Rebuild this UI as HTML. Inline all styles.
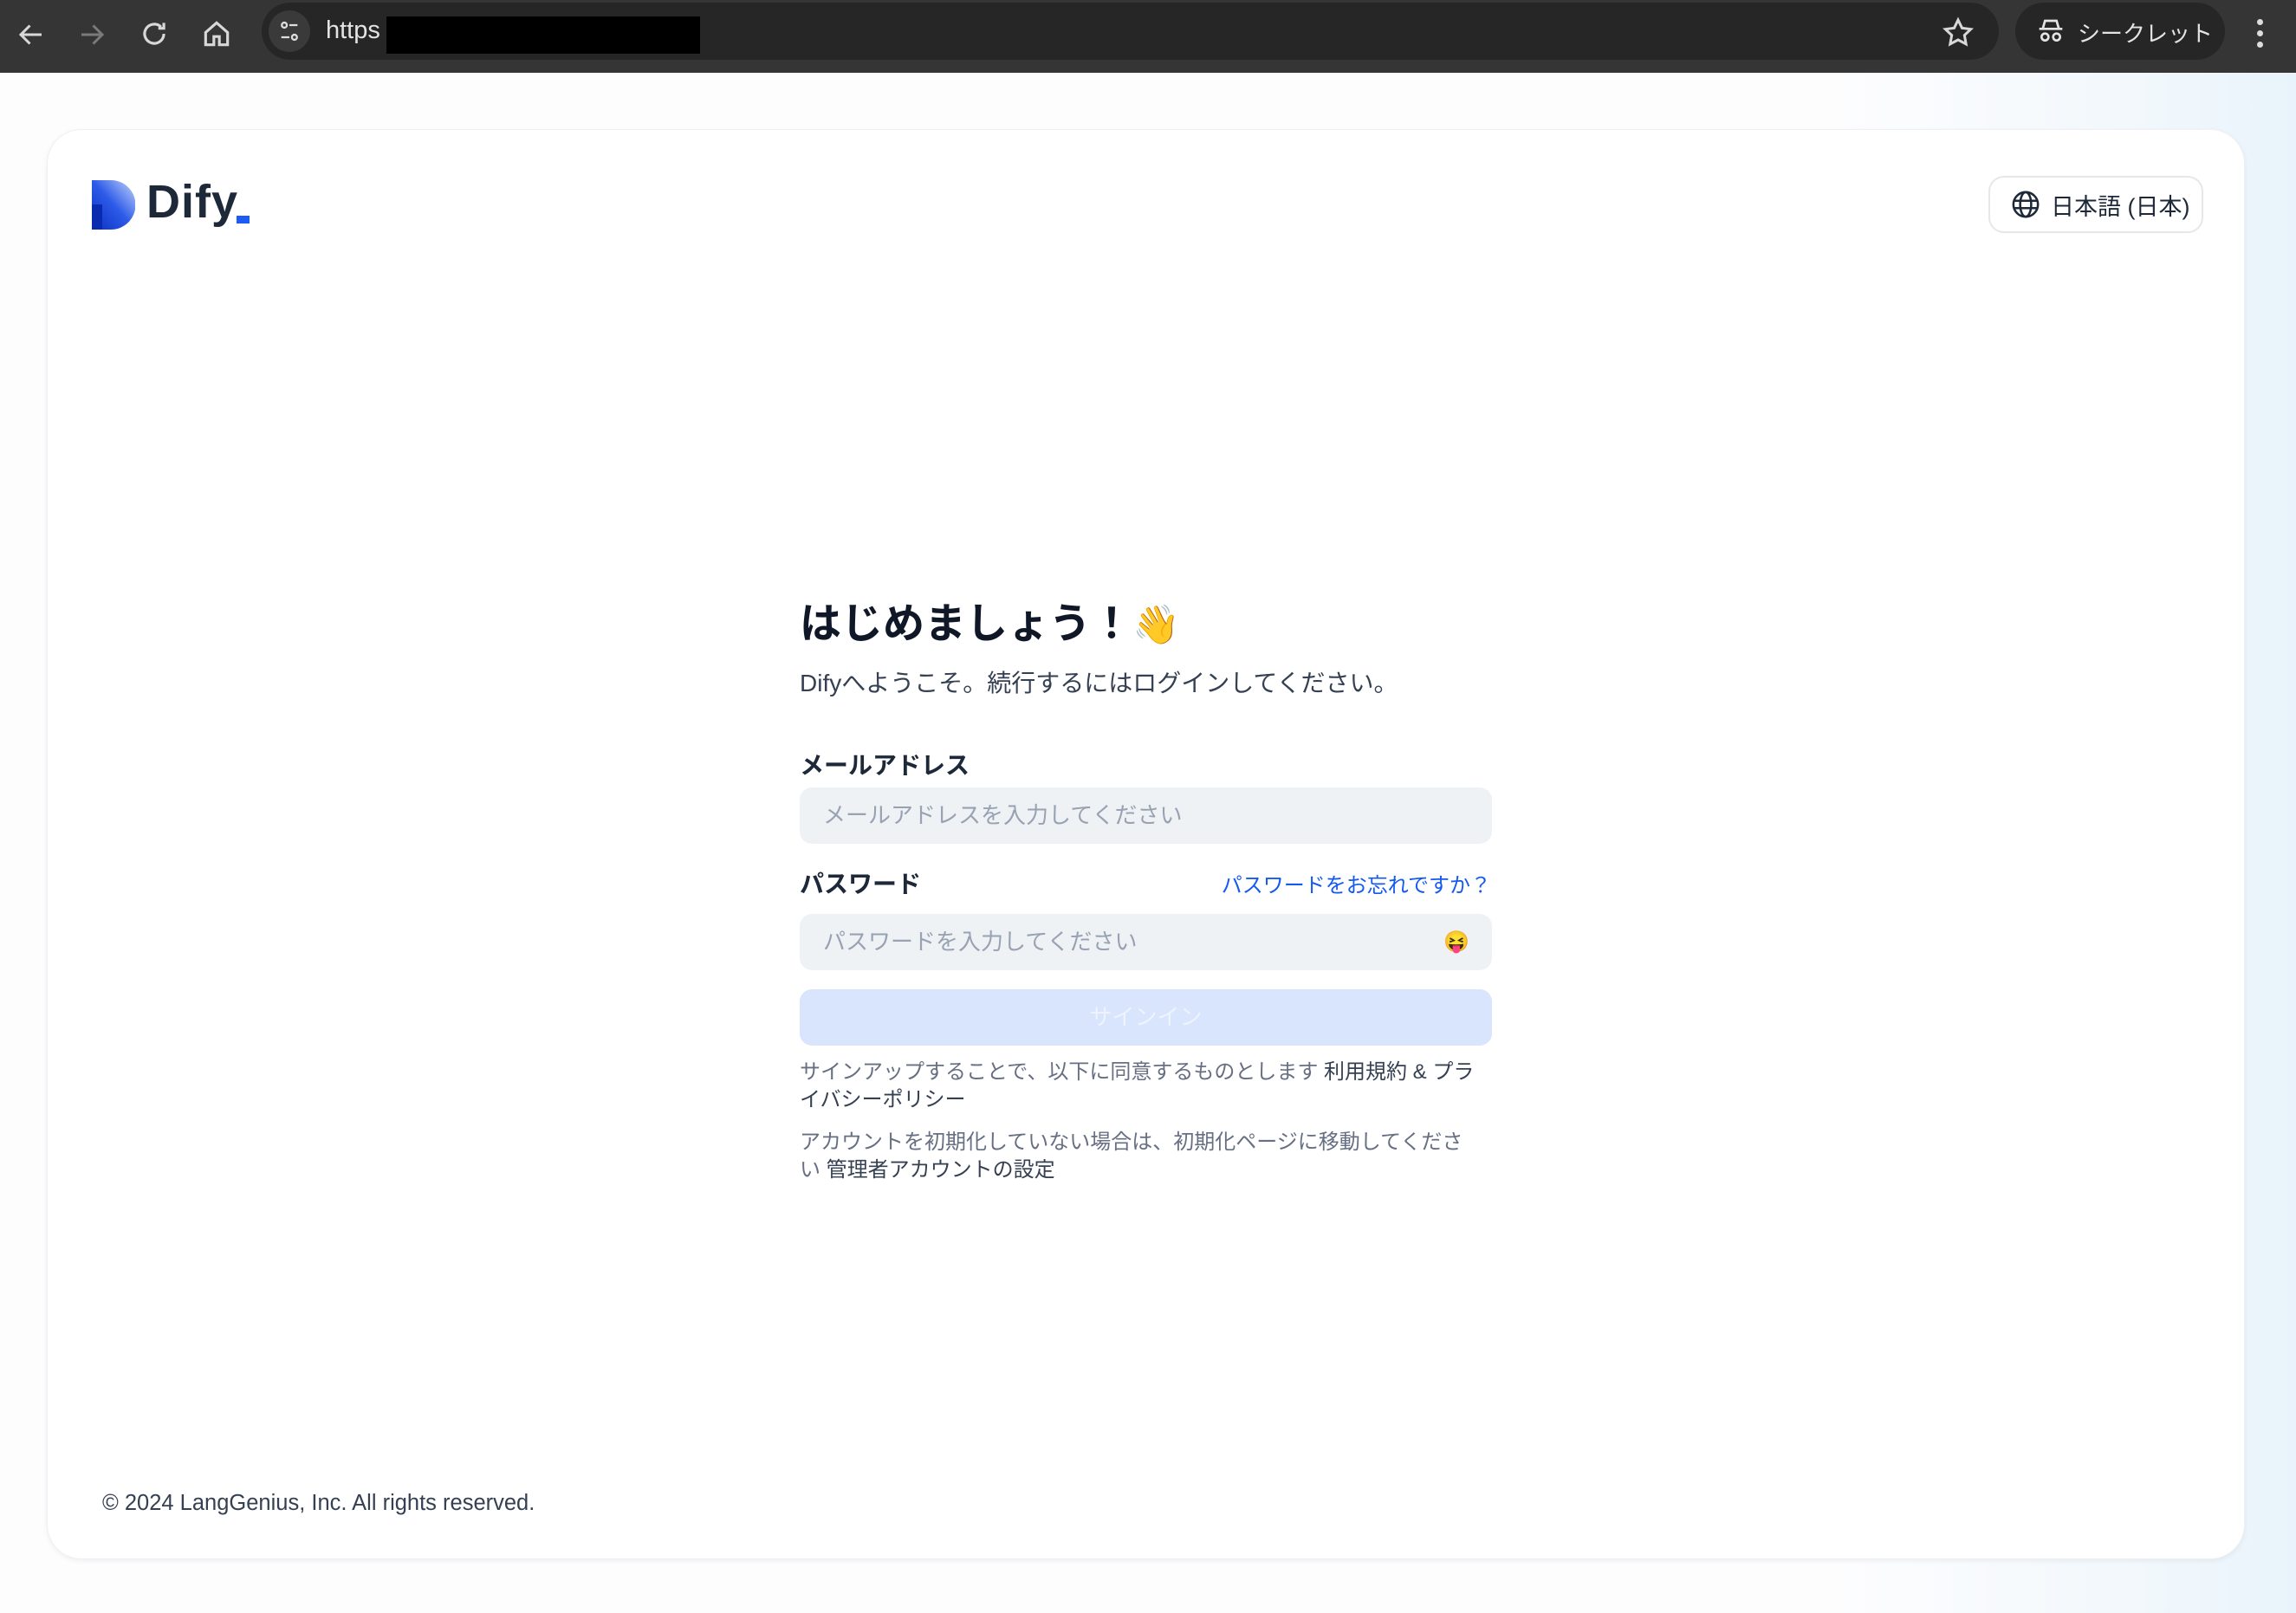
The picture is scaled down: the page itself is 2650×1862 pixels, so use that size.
<!DOCTYPE html>
<html><head><meta charset="utf-8">
<style>
*{margin:0;padding:0;box-sizing:border-box}
html,body{width:2650px;height:1862px;overflow:hidden}
body{font-family:"Liberation Sans","Noto Sans CJK JP",sans-serif;background:linear-gradient(90deg,#fdfdfe 0%,#fdfdfe 80%,#f0f7fc 95%,#e8f3fb 100%);position:relative}
.bar{position:absolute;left:0;top:0;width:2650px;height:84px;background:#353535}
.url{position:absolute;left:302px;top:3px;width:2005px;height:66px;border-radius:33px;background:#262626}
.tune{position:absolute;left:310px;top:12px;width:48px;height:48px;border-radius:24px;background:#3a3a3a}
.https{position:absolute;left:376px;top:19px;color:#e4e4e4;font-size:29px}
.redact{position:absolute;left:446px;top:19px;width:362px;height:43px;background:#000}
.incog{position:absolute;left:2326px;top:3px;width:242px;height:66px;border-radius:33px;background:#262626;color:#e4e4e4;font-size:26px}
.card{position:absolute;left:54px;top:149px;width:2537px;height:1651px;background:#fff;border-radius:40px;box-shadow:0 2px 6px rgba(16,24,40,.06);border:1px solid #eef0f3}
.lang{position:absolute;left:2295px;top:203px;width:248px;height:66px;border:2px solid #e5e7eb;border-radius:18px;display:flex;align-items:center;font-size:27px;color:#1d2939}
.form{position:absolute;left:923px;width:800px}
.inp{position:absolute;left:923px;width:799px;height:65px;background:#eff2f5;border-radius:14px;color:#98a2b3;font-size:26px;padding-left:27px;line-height:65px}
</style></head><body>
<div class="bar">
<svg style="position:absolute;left:18px;top:22px" width="36" height="36" viewBox="0 0 24 24" fill="none" stroke="#d8d8d8" stroke-width="2"><path d="M20 12H5M11 5l-7 7 7 7"/></svg>
<svg style="position:absolute;left:88px;top:22px" width="36" height="36" viewBox="0 0 24 24" fill="none" stroke="#7a7a7a" stroke-width="2"><path d="M4 12h15M13 5l7 7-7 7"/></svg>
<svg style="position:absolute;left:159px;top:20px" width="38" height="38" viewBox="0 0 24 24" fill="none" stroke="#d8d8d8" stroke-width="2"><path d="M19 12a7 7 0 1 1-2.1-5M19 4v4h-4"/></svg>
<svg style="position:absolute;left:231px;top:20px" width="38" height="38" viewBox="0 0 24 24" fill="none" stroke="#d8d8d8" stroke-width="2"><path d="M4 11l8-7 8 7v9h-6v-6h-4v6H4z"/></svg>
<div class="url"></div>
<div class="tune"><svg style="position:absolute;left:10px;top:10px" width="28" height="28" viewBox="0 0 24 24" fill="none" stroke="#ddd" stroke-width="2"><circle cx="7" cy="6" r="2.5"/><path d="M12 6h8M4 18h8"/><circle cx="17" cy="18" r="2.5"/></svg></div>
<div class="https">https</div>
<div class="redact"></div>
<svg style="position:absolute;left:2240px;top:18px" width="40" height="40" viewBox="0 0 24 24" fill="none" stroke="#d8d8d8" stroke-width="1.8"><path d="M12 3l2.7 5.6 6.1.8-4.4 4.2 1.1 6.1L12 16.8 6.5 19.7l1.1-6.1L3.2 9.4l6.1-.8z"/></svg>
<div class="incog"><svg style="position:absolute;left:25px;top:17px" width="32" height="32" viewBox="0 0 24 24" fill="none" stroke="#e4e4e4" stroke-width="2"><path d="M7 3h10l2 7H5zM2 10h20"/><circle cx="7" cy="17" r="3"/><circle cx="17" cy="17" r="3"/></svg><span style="position:absolute;left:72px;top:16px">シークレット</span></div>
<div style="position:absolute;left:2605px;top:22px;width:8px">
<div style="width:7px;height:7px;border-radius:4px;background:#ddd;margin-bottom:6px"></div><div style="width:7px;height:7px;border-radius:4px;background:#ddd;margin-bottom:6px"></div><div style="width:7px;height:7px;border-radius:4px;background:#ddd"></div></div>
</div>

<div class="card"></div>
<svg style="position:absolute;left:106px;top:208px" width="50" height="57" viewBox="0 0 50 57"><defs><linearGradient id="g" x1="0" y1="1" x2="1" y2="0"><stop offset="0" stop-color="#0b2fc2"/><stop offset=".5" stop-color="#2d5be8"/><stop offset="1" stop-color="#c8d8fb"/></linearGradient></defs><path d="M0 0h22a28 28 0 0 1 0 57H0z" fill="url(#g)"/><path d="M0 28h12v29H0z" fill="#0a2ab0"/></svg>
<div style="position:absolute;left:169px;top:202px;font-size:54px;font-weight:bold;color:#1d2939;letter-spacing:1px">Dify</div>
<div style="position:absolute;left:273px;top:249px;width:15px;height:9px;background:#1c5cf5"></div>

<div class="lang"><svg style="margin-left:24px" width="34" height="34" viewBox="0 0 24 24" fill="none" stroke="#1d2939" stroke-width="1.8"><circle cx="12" cy="12" r="10"/><ellipse cx="12" cy="12" rx="4.5" ry="10"/><path d="M2.5 9h19M2.5 15h19"/></svg><span style="margin-left:12px">日本語 (日本)</span></div>

<div class="form" style="top:680px;font-size:48px;font-weight:bold;color:#101828">はじめましょう！<span style="font-family:sans-serif;font-size:44px">👋</span></div>
<div class="form" style="top:767px;font-size:28px;color:#354052">Difyへようこそ。続行するにはログインしてください。</div>
<div class="form" style="top:862px;font-size:28px;font-weight:bold;color:#1d2939">メールアドレス</div>
<div class="inp" style="top:909px">メールアドレスを入力してください</div>
<div class="form" style="top:999px;font-size:28px;font-weight:bold;color:#1d2939">パスワード<span style="position:absolute;right:2px;top:3px;font-weight:normal;font-size:24px;color:#155aef">パスワードをお忘れですか？</span></div>
<div class="inp" style="top:1055px">パスワードを入力してください<span style="position:absolute;right:26px;top:0;font-size:24px">😝</span></div>
<div class="inp" style="top:1142px;background:#d8e5fd;color:#eef3fe;padding:0;text-align:center">サインイン</div>
<div class="form" style="top:1222px;font-size:24px;line-height:32px;color:#676f83">サインアップすることで、以下に同意するものとします <span style="color:#354052">利用規約 &amp; プライバシーポリシー</span></div>
<div class="form" style="top:1303px;font-size:24px;line-height:32px;color:#676f83;width:780px">アカウントを初期化していない場合は、初期化ページに移動してください <span style="color:#354052">管理者アカウントの設定</span></div>
<div style="position:absolute;left:118px;top:1721px;font-size:25.5px;color:#354052">© 2024 LangGenius, Inc. All rights reserved.</div>
</body></html>
